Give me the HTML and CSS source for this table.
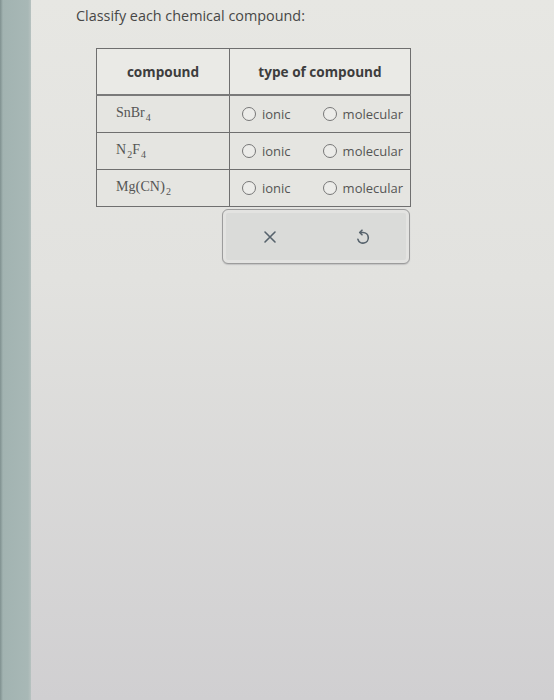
FILE: index.html
```html
<!DOCTYPE html>
<html>
<head>
<meta charset="utf-8">
<link rel="stylesheet" href="styles.css">
</head>
<body>
<div class="page">
  <div class="strip"></div>
  <div class="main">
    <div class="title">Classify each chemical compound:</div>
    <table class="grid">
      <colgroup><col class="c1"><col class="c2"></colgroup>
      <tr class="head">
        <th>compound</th>
        <th>type of compound</th>
      </tr>
      <tr>
        <td class="formula">SnBr<sub>4</sub></td>
        <td><div class="opts"><span class="opt"><span class="radio"></span>ionic</span><span class="opt"><span class="radio"></span>molecular</span></div></td>
      </tr>
      <tr>
        <td class="formula">N<sub>2</sub>F<sub>4</sub></td>
        <td><div class="opts"><span class="opt"><span class="radio"></span>ionic</span><span class="opt"><span class="radio"></span>molecular</span></div></td>
      </tr>
      <tr>
        <td class="formula">Mg<span class="par">(</span>CN<span class="par">)</span><sub>2</sub></td>
        <td><div class="opts"><span class="opt"><span class="radio"></span>ionic</span><span class="opt"><span class="radio"></span>molecular</span></div></td>
      </tr>
    </table>
    <div class="actions">
      <span class="btn">
        <svg width="14" height="14" viewBox="0 0 14 14"><path d="M2 2 L12 12 M12 2 L2 12" stroke="#56626c" stroke-width="1.6" fill="none" stroke-linecap="round"/></svg>
      </span>
      <span class="btn">
        <svg width="16" height="17" viewBox="0 0 16 17"><path d="M5.2 4.5 H8 A5.3 5.3 0 1 1 2.9 11.2" stroke="#56626c" stroke-width="1.6" fill="none" stroke-linecap="round"/><path d="M7 2.2 L4.7 4.5 L7 6.8" stroke="#56626c" stroke-width="1.6" fill="none" stroke-linecap="round" stroke-linejoin="round"/></svg>
      </span>
    </div>
  </div>
</div>
</body>
</html>
```
FILE: styles.css
```css
html, body {
  margin: 0;
  padding: 0;
  height: 100%;
}
.page {
  display: flex;
  width: 554px;
  height: 700px;
  overflow: hidden;
}
.strip {
  width: 31px;
  flex: none;
  background: linear-gradient(90deg, #7f908f 0px, #a2b3b1 3px, #a8b8b6 28px, #b7c2c0 31px);
}
.main {
  flex: 1;
  background: linear-gradient(180deg, #e7e7e3 0%, #e2e2df 40%, #d0cfd1 100%);
  padding: 6px 0 0 45px;
  font-family: "Open Sans", "DejaVu Sans", sans-serif;
  color: #4a4a4a;
}
.title {
  font-size: 14.4px;
  line-height: 20px;
  color: #474747;
}
.grid {
  margin: 22px 0 0 20px;
  border-collapse: collapse;
  table-layout: fixed;
  width: 314px;
  border: 1.5px solid #5e5e5e;
}
.c1 { width: 133px; }
.c2 { width: 181px; }
.grid th, .grid td {
  border: 1px solid #6f6f6f;
  padding: 0;
}
.grid .head th {
  height: 45px;
  font-size: 13.6px;
  font-weight: 700;
  color: #3d3d3d;
  background: #eaeae6;
  border-bottom: 2px solid #7a7a7a;
}
.grid td {
  height: 33px;
  background: #e5e5e1;
}
.formula {
  font-family: "Liberation Serif", "Times New Roman", serif;
  font-size: 14px;
  color: #555;
  padding-left: 19px !important;
  vertical-align: middle;
  padding-bottom: 3px !important;
  text-align: left;
}
.formula sub {
  font-size: 10px;
  vertical-align: -4px;
  margin-left: 1px;
  line-height: 0;
}
.par { font-size: 15px; }
.opts {
  display: flex;
  align-items: center;
  padding-left: 12px;
  gap: 32px;
  font-size: 13px;
  color: #555;
}
.opt {
  display: flex;
  align-items: center;
  gap: 6px;
}
.radio {
  width: 12px;
  height: 12px;
  border: 1px solid #777;
  border-radius: 50%;
  background: #ecece9;
}
.actions {
  margin: 2px 0 0 146px;
  width: 186px;
  height: 53px;
  border: 1px solid #9c9c9c;
  border-radius: 6px;
  background: #dadbd9;
  box-shadow: inset 0 0 0 3px #e3e3e1, 0 1px 1px #c4c4c4;
  display: flex;
  justify-content: space-around;
  align-items: center;
}
.btn {
  display: flex;
  align-items: center;
  justify-content: center;
  width: 60px;
}
```
